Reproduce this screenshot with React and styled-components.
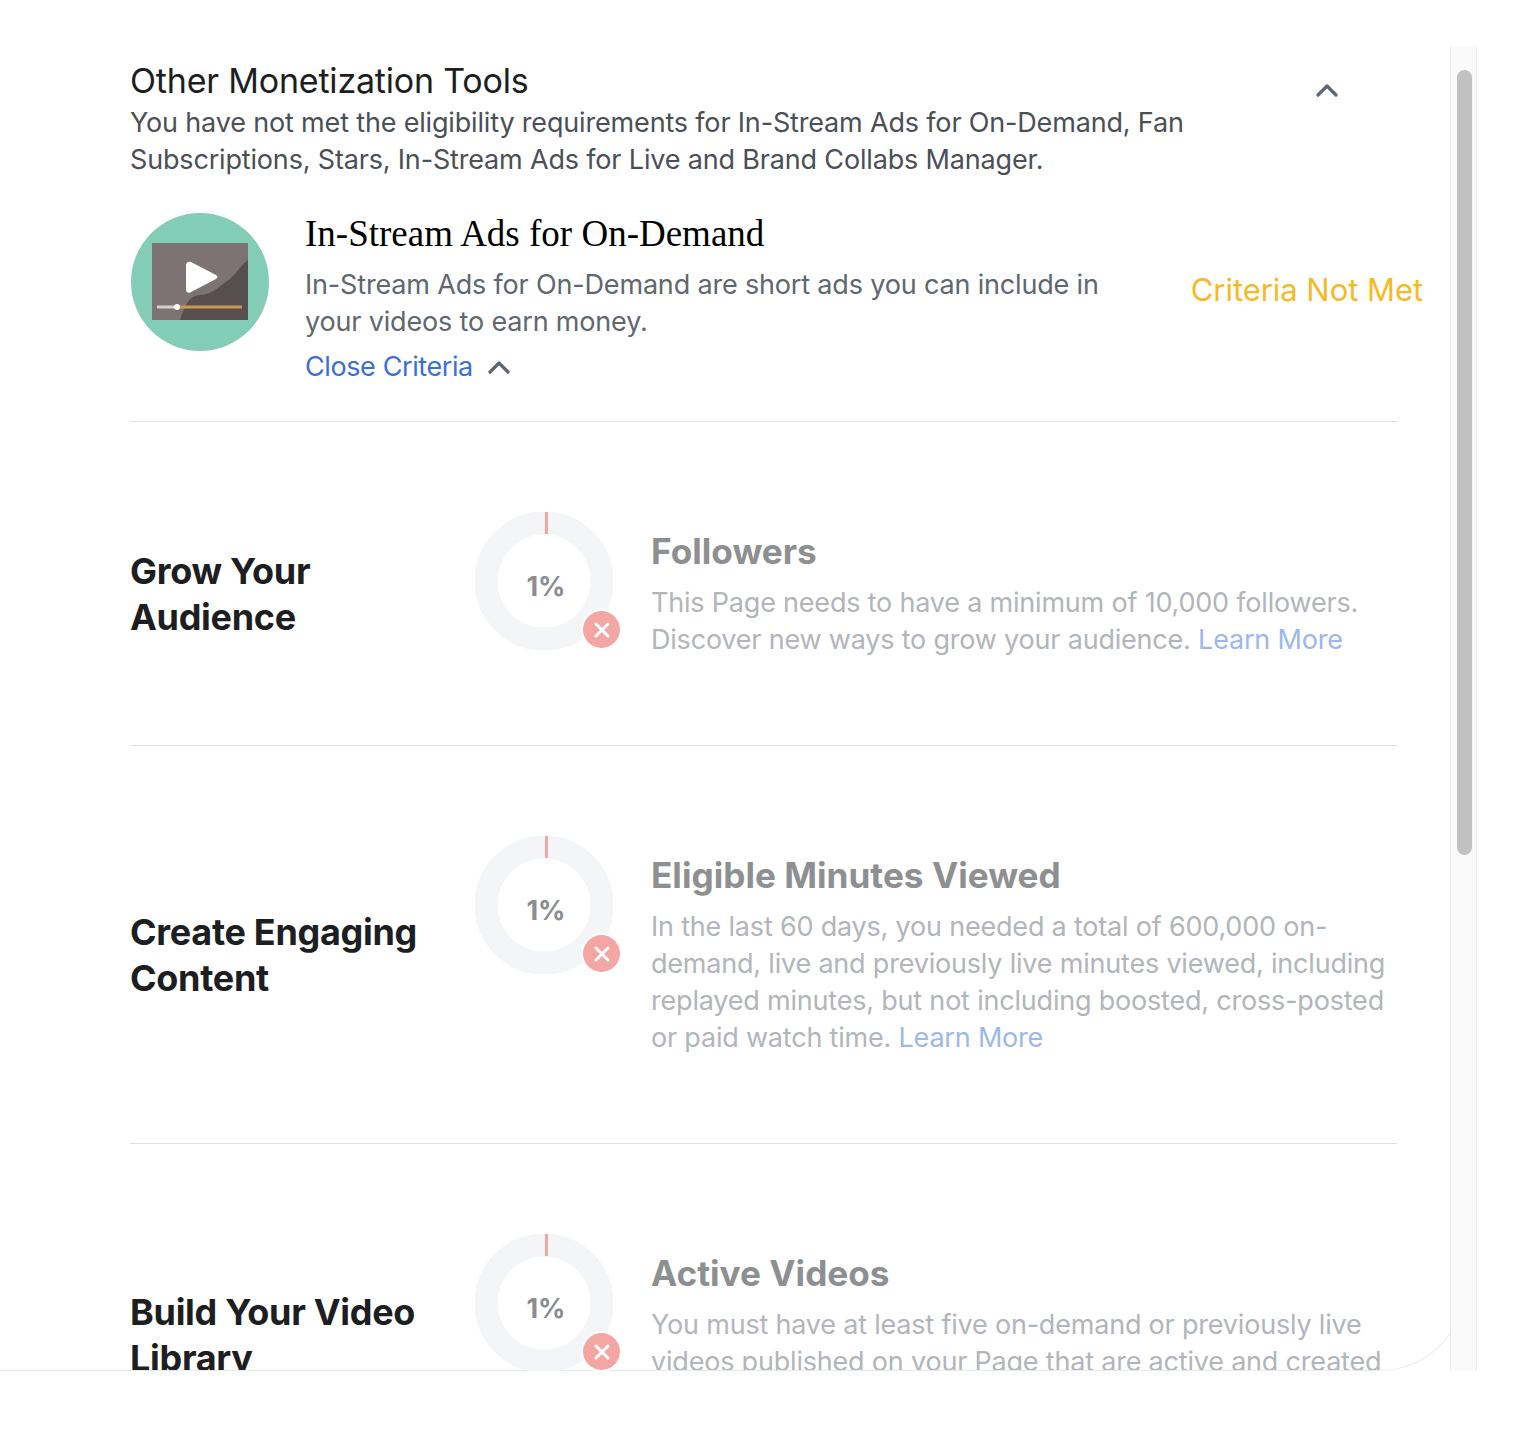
import React from 'react';
import styled, { createGlobalStyle } from 'styled-components';

const GlobalStyle = createGlobalStyle`
  html, body {
    margin: 0;
    background: #fff;
    font-family: Inter, "Liberation Sans", sans-serif;
  }
  body { height: 1437px; overflow: hidden; }
`;

const Frame = styled.div`
  display: flex;
  width: 1477px;
  height: 1371px;
`;

const Content = styled.main`
  position: relative;
  width: 1450px;
  height: 1371px;
  padding: 58px 27px 0 130px;
  box-sizing: border-box;
  overflow: hidden;
  &::before {
    content: '';
    position: absolute;
    left: 0;
    bottom: 0;
    width: 1300px;
    height: 1px;
    background: #e9eaec;
  }
  &::after {
    content: '';
    position: absolute;
    right: -15px;
    bottom: 0;
    width: 200px;
    height: 100px;
    box-sizing: border-box;
    border-right: 1px solid #e9eaec;
    border-bottom: 1px solid #e9eaec;
    border-radius: 0 0 85px 0;
  }
`;

const Track = styled.div`
  width: 27px;
  margin-top: 46px;
  padding: 24px 5px 0 6px;
  box-sizing: border-box;
  background: #fafafa;
  border-left: 1px solid #ececec;
  border-right: 1px solid #ececec;
`;

const Thumb = styled.div`
  width: 15px;
  height: 785px;
  border-radius: 8px;
  background: #c1c1c1;
`;

const Header = styled.header`
  display: flex;
  justify-content: space-between;
  margin-right: 85px;
`;

const HeaderTitle = styled.h2`
  margin: 0;
  font-size: 34px;
  line-height: 46px;
  font-weight: 400;
  letter-spacing: -0.2px;
  color: #1c1e21;
`;

const HeaderText = styled.p`
  margin: 0;
  max-width: 1100px;
  font-size: 27px;
  line-height: 37px;
  letter-spacing: -0.17px;
  color: #4b4f56;
`;

const Toggle = styled.span`
  display: flex;
  flex: none;
  margin-top: 25px;
  color: #606770;
`;

const Intro = styled.section`
  display: flex;
  margin: 35px 0 36px 1px;
`;

const IntroBody = styled.div`
  flex: 1;
  margin-left: 36px;
  padding-top: 1px;
`;

const IntroTitle = styled.h3`
  margin: 0 0 12px;
  font-family: "Liberation Serif", serif;
  font-size: 37px;
  line-height: 40px;
  font-weight: 400;
  color: #000;
`;

const IntroText = styled.p`
  margin: 0;
  max-width: 830px;
  font-size: 27px;
  line-height: 37px;
  letter-spacing: -0.17px;
  color: #606770;
`;

const CloseLink = styled.a`
  display: inline-flex;
  align-items: center;
  gap: 15px;
  margin-top: 8px;
  font-size: 27px;
  line-height: 37px;
  letter-spacing: -0.4px;
  color: #3a70d8;
  svg { color: #606770; margin-top: 1px; }
`;

const Status = styled.span`
  flex: none;
  margin-top: 57px;
  font-size: 31px;
  line-height: 40px;
  letter-spacing: -0.05px;
  color: #f7b928;
`;

const Row = styled.section`
  display: flex;
  margin-right: 26px;
  padding: 90px 0 87px;
  border-top: 1px solid #dddfe2;
`;

const RowHeading = styled.h3`
  flex: none;
  align-self: center;
  width: 345px;
  margin: 0;
  padding-top: 18px;
  font-size: 36px;
  line-height: 46px;
  font-weight: 700;
  letter-spacing: -0.3px;
  color: #1c1e21;
`;

const Meter = styled.div`
  position: relative;
  flex: none;
  width: 176px;
  height: 138px;
`;

const MeterValue = styled.span`
  position: absolute;
  left: 1px;
  top: 55px;
  width: 140px;
  text-align: center;
  font-size: 27px;
  line-height: 40px;
  font-weight: 700;
  color: #8b8d90;
`;

const FailBadge = styled.span`
  position: absolute;
  left: 108px;
  top: 99px;
  display: flex;
  align-items: center;
  justify-content: center;
  width: 37px;
  height: 37px;
  border-radius: 50%;
  background: #f3a6a3;
  box-shadow: 0 0 0 2px #fff;
`;

const Criterion = styled.div`
  flex: 1;
`;

const CriterionTitle = styled.h4`
  margin: 0 0 10px;
  padding-top: 16px;
  font-size: 35.2px;
  line-height: 46px;
  font-weight: 700;
  color: #8e8f91;
`;

const CriterionText = styled.p`
  margin: 0;
  min-height: ${(props) => props.$lines * 37}px;
  font-size: 27px;
  line-height: 37px;
  letter-spacing: -0.2px;
  color: #b2b5ba;
`;

const LearnMore = styled.a`
  color: #9cb8ec;
`;

function Chevron() {
  return (
    <svg width="22" height="14" viewBox="0 0 22 14" fill="none">
      <path d="M2 12l9-9 9 9" stroke="currentColor" strokeWidth="3.2" strokeLinecap="round" strokeLinejoin="round" />
    </svg>
  );
}

function VideoIcon() {
  return (
    <svg width="138" height="138" viewBox="0 0 138 138" style={{ flex: 'none' }}>
      <circle cx="69" cy="69" r="69" fill="#83ccb6" />
      <rect x="21" y="30" width="96" height="77" fill="#7d7274" />
      <path d="M117 47C108 54 104 63 96 68C88 74 80 82 68 82C58 83 54 92 49 107H117Z" fill="#574f4f" />
      <path d="M55 52C55 49 58 48 60 49L85 62C87 63 87 65 85 66L60 79C58 81 55 79 55 77Z" fill="#fff" />
      <path d="M26 94H46" stroke="#d4cfcf" strokeWidth="3" />
      <path d="M46 94H111" stroke="#c79a4b" strokeWidth="3" />
      <circle cx="46" cy="94" r="3" fill="#fff" />
    </svg>
  );
}

function ProgressRing({ value }) {
  return (
    <Meter>
      <svg width="138" height="138" viewBox="0 0 138 138">
        <circle cx="69" cy="69" r="58" fill="none" stroke="#f4f5f7" strokeWidth="23" />
        <rect x="70" y="0" width="3" height="22" fill="#f3a6a3" />
      </svg>
      <MeterValue>{value}</MeterValue>
      <FailBadge>
        <svg width="18" height="18" viewBox="0 0 18 18">
          <path d="M3 3l12 12M15 3L3 15" stroke="#fff" strokeWidth="3" strokeLinecap="round" />
        </svg>
      </FailBadge>
    </Meter>
  );
}

const criteria = [
  {
    heading: ['Grow Your', 'Audience'],
    title: 'Followers',
    text: 'This Page needs to have a minimum of 10,000 followers. Discover new ways to grow your audience.',
    lines: 2,
    link: true,
  },
  {
    heading: ['Create Engaging', 'Content'],
    title: 'Eligible Minutes Viewed',
    text: 'In the last 60 days, you needed a total of 600,000 on-demand, live and previously live minutes viewed, including replayed minutes, but not including boosted, cross-posted or paid watch time.',
    lines: 4,
    link: true,
  },
  {
    heading: ['Build Your Video', 'Library'],
    title: 'Active Videos',
    text: 'You must have at least five on-demand or previously live videos published on your Page that are active and created',
    lines: 3,
  },
];

export default function App() {
  return (
    <>
      <GlobalStyle />
      <Frame>
        <Content>
          <Header>
            <div>
              <HeaderTitle>Other Monetization Tools</HeaderTitle>
              <HeaderText>
                You have not met the eligibility requirements for In-Stream Ads for On-Demand, Fan
                Subscriptions, Stars, In-Stream Ads for Live and Brand Collabs Manager.
              </HeaderText>
            </div>
            <Toggle><Chevron /></Toggle>
          </Header>
          <Intro>
            <VideoIcon />
            <IntroBody>
              <IntroTitle>In-Stream Ads for On-Demand</IntroTitle>
              <IntroText>
                In-Stream Ads for On-Demand are short ads you can include in your videos to earn money.
              </IntroText>
              <CloseLink>Close Criteria <Chevron /></CloseLink>
            </IntroBody>
            <Status>Criteria Not Met</Status>
          </Intro>
          {criteria.map((item) => (
            <Row key={item.title}>
              <RowHeading>{item.heading[0]}<br />{item.heading[1]}</RowHeading>
              <ProgressRing value="1%" />
              <Criterion>
                <CriterionTitle>{item.title}</CriterionTitle>
                <CriterionText $lines={item.lines}>
                  {item.text}
                  {item.link && <> <LearnMore>Learn More</LearnMore></>}
                </CriterionText>
              </Criterion>
            </Row>
          ))}
        </Content>
        <Track><Thumb /></Track>
      </Frame>
    </>
  );
}
